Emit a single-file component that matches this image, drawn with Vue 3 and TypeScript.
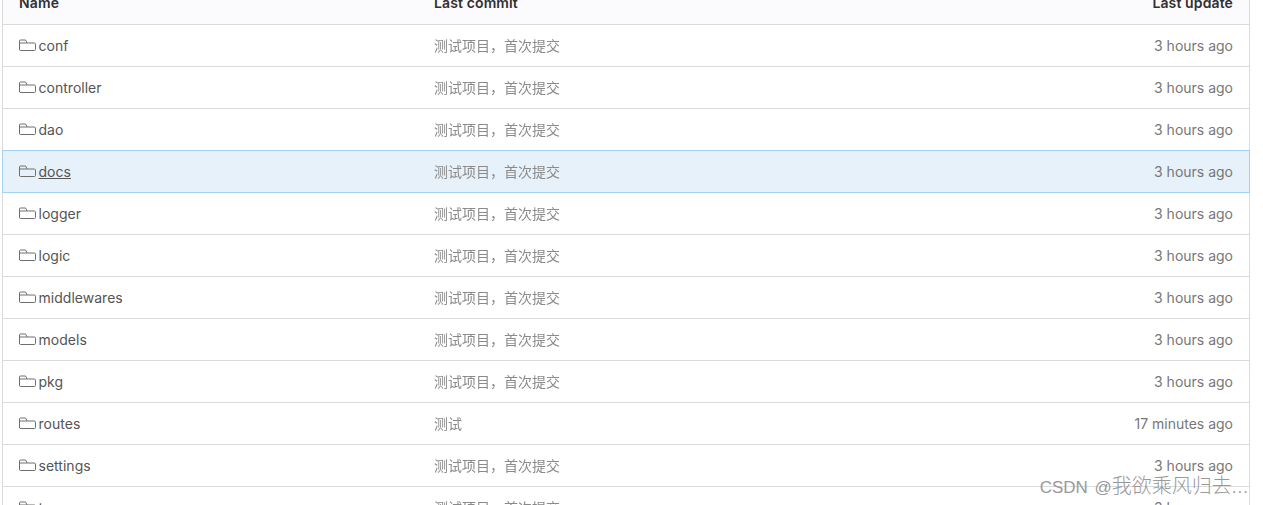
<script setup lang="ts">
interface Row { name: string; commit: string; time: string; active?: boolean }
const full = '测试项目，首次提交'
const names = ['conf', 'controller', 'dao', 'docs', 'logger', 'logic', 'middlewares', 'models', 'pkg']
const rows: Row[] = [
  ...names.map((name) => ({ name, commit: full, time: '3 hours ago', active: name === 'docs' })),
  { name: 'routes', commit: '测试', time: '17 minutes ago' },
  { name: 'settings', commit: full, time: '3 hours ago' },
  { name: 'tmp', commit: full, time: '3 hours ago' },
]
</script>

<template>
  <div class="page">
    <div class="table">
      <div class="row head">
        <div>Name</div>
        <div>Last commit</div>
        <div class="right">Last update</div>
      </div>
      <div v-for="r in rows" :key="r.name" class="row" :class="{ active: r.active }">
        <div class="name">
          <svg class="icon" width="17" height="17" viewBox="0 0 17 17" fill="none">
            <path d="M0.5 13V4C0.5 3.4 0.9 3 1.5 3H6.5L8.2 6H15.3C16 6 16.5 6.5 16.5 7.1V12.5C16.5 13.1 16 13.5 15.3 13.5H1.5C1 13.5 0.5 13.1 0.5 12.5M0.5 6H8.2" stroke="#6e6e6e" stroke-width="1" />
          </svg>
          <span class="label">{{ r.name }}</span>
        </div>
        <div class="commit">{{ r.commit }}</div>
        <div class="right time">{{ r.time }}</div>
      </div>
    </div>
    <div class="watermark">CSDN @<span class="cn">我欲乘风归去</span><span class="dots">...</span></div>
  </div>
</template>

<style>
html, body { margin: 0; overflow: hidden; background: #fff; }
</style>

<style scoped>
.page {
  position: relative;
  height: 505px;
  overflow: hidden;
  padding: 0 13px 0 2px;
  font-family: Inter, "Noto Sans CJK SC", sans-serif;
  font-size: 14px;
  color: #555555;
}
.table {
  margin-top: -18px;
  border-left: 1px solid #dbdbdb;
  border-right: 1px solid #dbdbdb;
}
.row {
  display: grid;
  grid-template-columns: 415px 1fr 300px;
  align-items: center;
  height: 41px;
  padding: 0 16px;
  border-bottom: 1px solid #dbdbdb;
}
.head {
  height: 40px;
  padding-bottom: 2px;
  background: #fbfafd;
  color: #303030;
  font-weight: 600;
  letter-spacing: 0.12px;
}
.active {
  position: relative;
  margin: -1px -1px 0;
  background: #e6f1fa;
  border: 1px solid #a3d0f5;
}
.name { display: flex; align-items: center; gap: 2.5px; letter-spacing: 0.02px; }
.icon { flex: none; }
.active .label { text-decoration: underline; }
.commit {
  color: #8a8a8a;
  font-family: "Noto Sans CJK SC", sans-serif;
  line-height: 20px;
  margin-top: -2px;
  will-change: transform;
}
.right { text-align: right; }
.time { color: #777777; }
.watermark {
  position: absolute;
  right: 14px;
  top: 474px;
  font-size: 17px;
  line-height: 24px;
  white-space: nowrap;
  word-spacing: 2px;
  color: #999999;
  font-family: "Liberation Sans", "Noto Sans CJK SC", sans-serif;
}
.cn { font-size: 20px; font-weight: 300; }
.dots { letter-spacing: 1px; }
</style>
